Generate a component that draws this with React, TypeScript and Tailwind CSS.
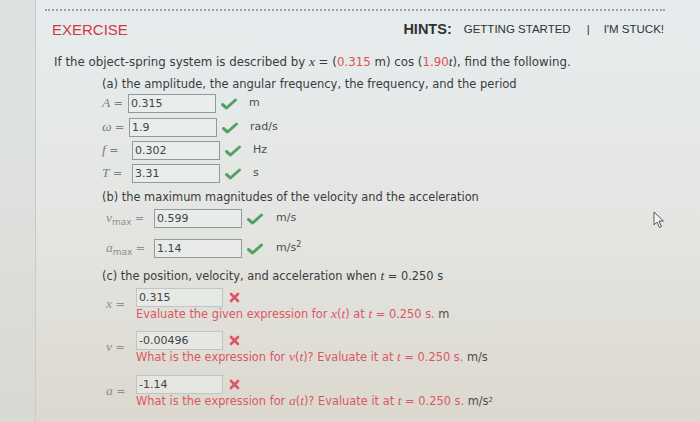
import React from 'react';

// Small glyphs used next to the answer boxes.
function Check() {
  return (
    <svg width="18" height="14" viewBox="0 0 18 14" className="shrink-0">
      <path d="M2.5 7.5 L6.5 11 L15.5 3" fill="none" stroke="#52a064" strokeWidth="3" strokeLinecap="round" strokeLinejoin="round" />
    </svg>
  );
}

function Cross() {
  return (
    <svg width="11" height="11" viewBox="0 0 11 11" className="shrink-0">
      <path d="M2 2 L9 9 M9 2 L2 9" fill="none" stroke="#e05468" strokeWidth="2.6" strokeLinecap="round" />
    </svg>
  );
}

function Box({ value, w = 'w-[88px]', light = false }: { value: string; w?: string; light?: boolean }) {
  return (
    <div
      className={`${w} h-[19px] shrink-0 border ${light ? 'border-[#bcc6c6]' : 'border-[#8f9c9c]'} bg-[#eef1f0]/50 pl-[2px] text-[11px] leading-[17px] text-[#3e4444]`}
    >
      {value}
    </div>
  );
}

const M = ({ children }: { children: React.ReactNode }) => (
  <i className="font-['Liberation_Serif',serif] text-[13.5px]">{children}</i>
);

function Row({ label, labelW, value, unit, top }: { label: React.ReactNode; labelW: string; value: string; unit: React.ReactNode; top: string }) {
  return (
    <div className={`ml-[66px] ${top} flex h-[19px] items-center`}>
      <div className={`${labelW} shrink-0 text-[11px] text-[#7a7f80]`}>{label}</div>
      <Box value={value} />
      <div className="ml-[4px] w-[29px]">
        <Check />
      </div>
      <span className="text-[11px] text-[#4a4e4e]">{unit}</span>
    </div>
  );
}

function Wrong({ label, value, msg, top }: { label: React.ReactNode; value: string; msg: React.ReactNode; top: string }) {
  return (
    <div className={`ml-[70px] ${top} flex items-center`}>
      <div className="w-[30px] shrink-0 text-[11px] text-[#8a8f90]">{label}</div>
      <div className="flex flex-col">
        <div className="flex h-[18px] items-center">
          <Box value={value} w="w-[87px]" light />
          <div className="ml-[6px]">
            <Cross />
          </div>
        </div>
        <div className="h-[14px] whitespace-nowrap text-[11.4px] leading-[15px] text-[#da5862]">{msg}</div>
      </div>
    </div>
  );
}

export default function App() {
  return (
    <div className="relative h-[422px] w-[700px] overflow-hidden bg-linear-to-b from-[#e6ecee] via-[#e5e6e3] to-[#dcd8cf] font-['DejaVu_Sans',sans-serif] text-[#383c3d]">
      <div className="flex h-full">
        <div className="h-full w-[36px] shrink-0 border-r border-[#c8cbc8] bg-[#d6d9d6]/50" />
        <div className="flex-1 pt-[9px]">
          <div className="ml-[9px] w-[620px] border-t-2 border-dotted border-[#99a0a3]" />

          <div className="ml-[16px] mt-[10px] flex h-[18px] w-[612px] items-center font-['Liberation_Sans',sans-serif]">
            <span className="text-[15px] text-[#cf3a3f]">EXERCISE</span>
            <span className="ml-auto text-[14.5px] font-bold text-[#2e3233]">HINTS:</span>
            <span className="ml-[12px] text-[11.5px] text-[#2e3233]">GETTING STARTED</span>
            <span className="ml-[16px] text-[11.5px] text-[#2e3233]">|</span>
            <span className="ml-[14px] text-[11.5px] text-[#2e3233]">I'M STUCK!</span>
          </div>

          <div className="ml-[18px] mt-[15px] h-[16px] whitespace-nowrap text-[11.8px] leading-[16px]">
            If the object-spring system is described by <M>x</M> = (<span className="text-[#d9534f]">0.315</span> m) cos (
            <span className="text-[#d9534f]">1.90</span>
            <M>t</M>), find the following.
          </div>

          <div className="ml-[66px] mt-[6px] h-[16px] whitespace-nowrap text-[11.5px] leading-[16px]">
            (a) the amplitude, the angular frequency, the frequency, and the period
          </div>

          <Row top="mt-[2px]" labelW="w-[26px]" label={<><M>A</M> =</>} value="0.315" unit="m" />
          <Row top="mt-[5px]" labelW="w-[27px]" label={<><M>ω</M> =</>} value="1.9" unit="rad/s" />
          <Row top="mt-[4px]" labelW="w-[30px]" label={<><M>f</M> =</>} value="0.302" unit="Hz" />
          <Row top="mt-[4px]" labelW="w-[30px]" label={<><M>T</M> =</>} value="3.31" unit="s" />

          <div className="ml-[66px] mt-[6px] h-[16px] whitespace-nowrap text-[11.4px] leading-[16px]">
            (b) the maximum magnitudes of the velocity and the acceleration
          </div>

          <div className="ml-[70px] mt-[4px] flex h-[19px] items-center">
            <div className="w-[48px] shrink-0 text-[11px] text-[#8a8f90]">
              <M>v</M>
              <sub className="text-[9px]">max</sub> =
            </div>
            <Box value="0.599" />
            <div className="ml-[4px] w-[30px]">
              <Check />
            </div>
            <span className="text-[11px] text-[#4a4e4e]">m/s</span>
          </div>

          <div className="ml-[70px] mt-[11px] flex h-[19px] items-center">
            <div className="w-[48px] shrink-0 text-[11px] text-[#8a8f90]">
              <M>a</M>
              <sub className="text-[9px]">max</sub> =
            </div>
            <Box value="1.14" />
            <div className="ml-[4px] w-[30px]">
              <Check />
            </div>
            <span className="text-[11px] text-[#4a4e4e]">
              m/s<sup className="text-[8px]">2</sup>
            </span>
          </div>

          <div className="ml-[66px] mt-[10px] h-[16px] whitespace-nowrap text-[11.4px] leading-[16px]">
            (c) the position, velocity, and acceleration when <M>t</M> = 0.250 s
          </div>

          <Wrong
            top="mt-[4px]"
            label={<><M>x</M> =</>}
            value="0.315"
            msg={
              <>
                Evaluate the given expression for <M>x</M>(<M>t</M>) at <M>t</M> = 0.250 s. <span className="text-[#4a4e4e]">m</span>
              </>
            }
          />
          <Wrong
            top="mt-[11px]"
            label={<><M>v</M> =</>}
            value="-0.00496"
            msg={
              <>
                What is the expression for <M>v</M>(<M>t</M>)? Evaluate it at <M>t</M> = 0.250 s. <span className="text-[#4a4e4e]">m/s</span>
              </>
            }
          />
          <Wrong
            top="mt-[12px]"
            label={<><M>a</M> =</>}
            value="-1.14"
            msg={
              <>
                What is the expression for <M>a</M>(<M>t</M>)? Evaluate it at <M>t</M> = 0.250 s.{' '}
                <span className="text-[#4a4e4e]">
                  m/s<sup className="text-[7px]">2</sup>
                </span>
              </>
            }
          />
        </div>
      </div>

      {/* mouse pointer */}
      <svg width="12" height="18" viewBox="0 0 12 18" className="absolute left-[653px] top-[211px]">
        <path d="M1 1 L1 14 L4 11 L6.5 16.5 L8.5 15.5 L6 10 L10.5 10 Z" fill="#f4f4f2" stroke="#55595b" strokeWidth="1" strokeLinejoin="round" />
      </svg>
    </div>
  );
}
